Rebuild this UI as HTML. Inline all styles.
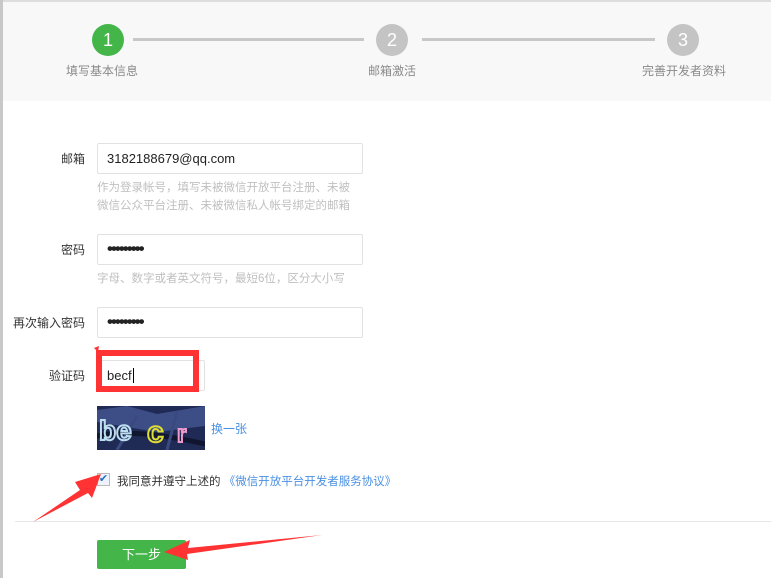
<!DOCTYPE html>
<html><head><meta charset="utf-8"><style>
*{margin:0;padding:0;box-sizing:border-box}
body{width:771px;height:578px;overflow:hidden;background:#fff;font-family:"Liberation Sans","Noto Sans CJK SC",sans-serif;position:relative}
.top{position:absolute;left:0;top:0;width:771px;height:101px;background:#f8f8f8;border-top:2px solid #ddd}
.lb{position:absolute;left:0;top:0;width:3px;height:578px;background:#c8c8c8}
.c{position:absolute;width:32px;height:32px;border-radius:50%;background:#c4c4c4;color:#fff;font-size:18px;text-align:center;line-height:32px;top:24px}
.ln{position:absolute;top:38px;height:3px;background:#c8c8c8}
.sl{position:absolute;top:62px;font-size:12px;color:#8a8a8a}
.lab{position:absolute;font-size:12px;color:#333;text-align:right;width:85px;left:0}
.in{position:absolute;left:97px;width:266px;height:31px;border:1px solid #e2e2e2;border-radius:2px;font-size:13px;color:#222;padding-left:9px;line-height:29px}
.pw{font-size:17px;font-weight:bold;letter-spacing:-2px;line-height:27px}
.h{position:absolute;left:97px;font-size:11.5px;color:#c0c0c0}
</style></head><body>
<div class="top"></div><div class="lb"></div>
<div class="c" style="left:92px;background:#44b549">1</div>
<div class="ln" style="left:133px;width:231px"></div>
<div class="c" style="left:376px">2</div>
<div class="ln" style="left:422px;width:233px"></div>
<div class="c" style="left:667px">3</div>
<div class="sl" style="left:66px">填写基本信息</div>
<div class="sl" style="left:368px">邮箱激活</div>
<div class="sl" style="left:642px">完善开发者资料</div>

<div class="lab" style="top:150px">邮箱</div>
<div class="in" style="top:143px">3182188679@qq.com</div>
<div class="h" style="top:179px">作为登录帐号，填写未被微信开放平台注册、未被</div>
<div class="h" style="top:197px">微信公众平台注册、未被微信私人帐号绑定的邮箱</div>
<div class="lab" style="top:241px">密码</div>
<div class="in pw" style="top:234px">•••••••••</div>
<div class="h" style="top:270px">字母、数字或者英文符号，最短6位，区分大小写</div>
<div class="lab" style="top:314px">再次输入密码</div>
<div class="in pw" style="top:307px">•••••••••</div>
<div class="lab" style="top:367px">验证码</div>
<div class="in" style="top:360px;width:108px">becf<span style="border-left:1px solid #000;margin-left:1px"></span></div>
<div style="position:absolute;left:96px;top:350px;width:103px;height:42px;border:6px solid #f33"></div>

<svg style="position:absolute;left:97px;top:406px" width="108" height="44">
<rect width="108" height="44" fill="#1f2a55"/>
<path d="M0 4 L30 0 L60 8 L108 0 L108 20 L60 26 L0 16Z" fill="#4a5c9a" opacity=".7"/>
<path d="M0 30 Q40 22 108 38" stroke="#111630" stroke-width="5" fill="none"/>
<path d="M20 44 L40 10 M70 44 L80 6" stroke="#3a4a80" stroke-width="3"/>
<text x="2" y="34" font-size="28" font-family="Liberation Sans" font-weight="bold" fill="none" stroke="#bde" stroke-width="2">be</text>
<text x="50" y="36" font-size="30" font-family="Liberation Sans" font-weight="bold" fill="none" stroke="#dd3" stroke-width="2">c</text>
<text x="80" y="36" font-size="24" font-family="Liberation Sans" font-weight="bold" fill="none" stroke="#e9c" stroke-width="2">r</text>
</svg>
<div style="position:absolute;left:211px;top:420px;font-size:12px;color:#4a90e2">换一张</div>

<div style="position:absolute;left:97px;top:473px;width:13px;height:13px;border:1px solid #bbb;background:#eef3fb;color:#1f6fc4;font-size:11px;line-height:11px;text-align:center">✔</div>
<div style="position:absolute;left:117px;top:473px;font-size:11.5px;color:#333;white-space:nowrap">我同意并遵守上述的 <span style="color:#4a90e2">《微信开放平台开发者服务协议》</span></div>

<div style="position:absolute;left:15px;top:521px;width:756px;height:1px;background:#e6e6e6"></div>
<div style="position:absolute;left:97px;top:540px;width:89px;height:29px;background:#44b549;border-radius:2px;color:#fff;font-size:13px;text-align:center;line-height:29px">下一步</div>

<svg style="position:absolute;left:0;top:0" width="771" height="578">
<polygon points="33,522 80,490 75,482 101,474 92,498 88,493" fill="#f33"/>
<polygon points="322,535 188,548 190,540 164,552 188,560 187,554" fill="#f33"/>
<polygon points="94,348 99,346 98,352" fill="#f33"/>
</svg>
</body></html>
